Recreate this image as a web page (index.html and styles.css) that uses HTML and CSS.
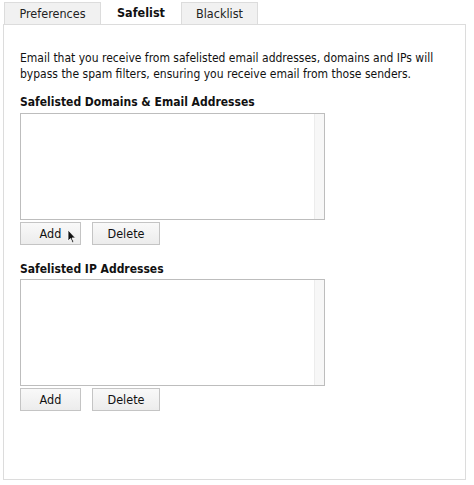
FILE: index.html
```html
<!DOCTYPE html>
<html>
<head>
<meta charset="utf-8">
<link rel="stylesheet" href="styles.css">
</head>
<body>
<div class="wrap">
  <div class="tabs">
    <div class="tab">Preferences</div>
    <div class="tab active">Safelist</div>
    <div class="tab">Blacklist</div>
  </div>
  <div class="panel">
    <p class="intro">Email that you receive from safelisted email addresses, domains and IPs will bypass the spam filters, ensuring you receive email from those senders.</p>
    <h3 class="heading">Safelisted Domains &amp; Email Addresses</h3>
    <div class="listbox"><div class="track"></div></div>
    <div class="buttons">
      <button class="btn add">Add
        <svg class="cursor" width="10" height="16" viewBox="0 0 10 16"><path d="M1 1 L1 12 L3.5 9.6 L5.5 14 L7 13.3 L5 9 L8.5 9 Z" fill="#111" stroke="#fff" stroke-width="0.8"/></svg>
      </button>
      <button class="btn del">Delete</button>
    </div>
    <h3 class="heading second">Safelisted IP Addresses</h3>
    <div class="listbox"><div class="track"></div></div>
    <div class="buttons">
      <button class="btn add">Add</button>
      <button class="btn del">Delete</button>
    </div>
  </div>
</div>
</body>
</html>
```
FILE: styles.css
```css
* { box-sizing: border-box; }
html, body { margin: 0; padding: 0; background: #fff; }
body { font-family: "DejaVu Sans Condensed", "DejaVu Sans", Verdana, sans-serif; color: #111; font-size: 12px; }
.wrap { padding: 1px 8px 0 3px; width: 474px; }
.tabs { display: flex; align-items: flex-end; height: 23px; padding-left: 1px; gap: 3px; }
.tab {
  height: 22px; line-height: 21px; text-align: center;
  background: #f1f1f1; border: 1px solid #dcdcdc; border-bottom: none;
  font-size: 12.5px; color: #222;
}
.tab:nth-child(1) { width: 97px; }
.tab:nth-child(2) { width: 74px; }
.tab:nth-child(3) { width: 77px; }
.tab.active { background: #fff; font-weight: bold; border-color: #fff; height: 23px; color: #111; }
.panel {
  border: 1px solid #dcdcdc; height: 456px; padding: 25px 16px 0 16px;
  box-shadow: 0 2px 0 #ececec;
}
.intro { margin: 0; line-height: 16px; font-size: 12px; width: 440px; }
.heading { margin: 13px 0 3px; font-size: 12px; font-weight: bold; line-height: 15px; }
.heading.second { margin-top: 17px; margin-bottom: 2px; }
.listbox {
  width: 305px; height: 107px; border: 1px solid #bdbdbd; background: #fff;
  display: flex; justify-content: flex-end;
}
.track { width: 10px; height: 100%; background: #f7f7f7; border-left: 1px solid #ececec; }
.buttons { display: flex; gap: 11px; margin-top: 2px; }
.btn {
  font-family: "DejaVu Sans Condensed", "DejaVu Sans", Verdana, sans-serif; font-size: 12.5px; color: #111;
  height: 23px; background: linear-gradient(#f9f9f9, #ececec);
  border: 1px solid #c4c4c4; padding: 0; position: relative;
}
.btn.add { width: 61px; }
.btn.del { width: 68px; }
.cursor { position: absolute; left: 46px; top: 6px; }
```
